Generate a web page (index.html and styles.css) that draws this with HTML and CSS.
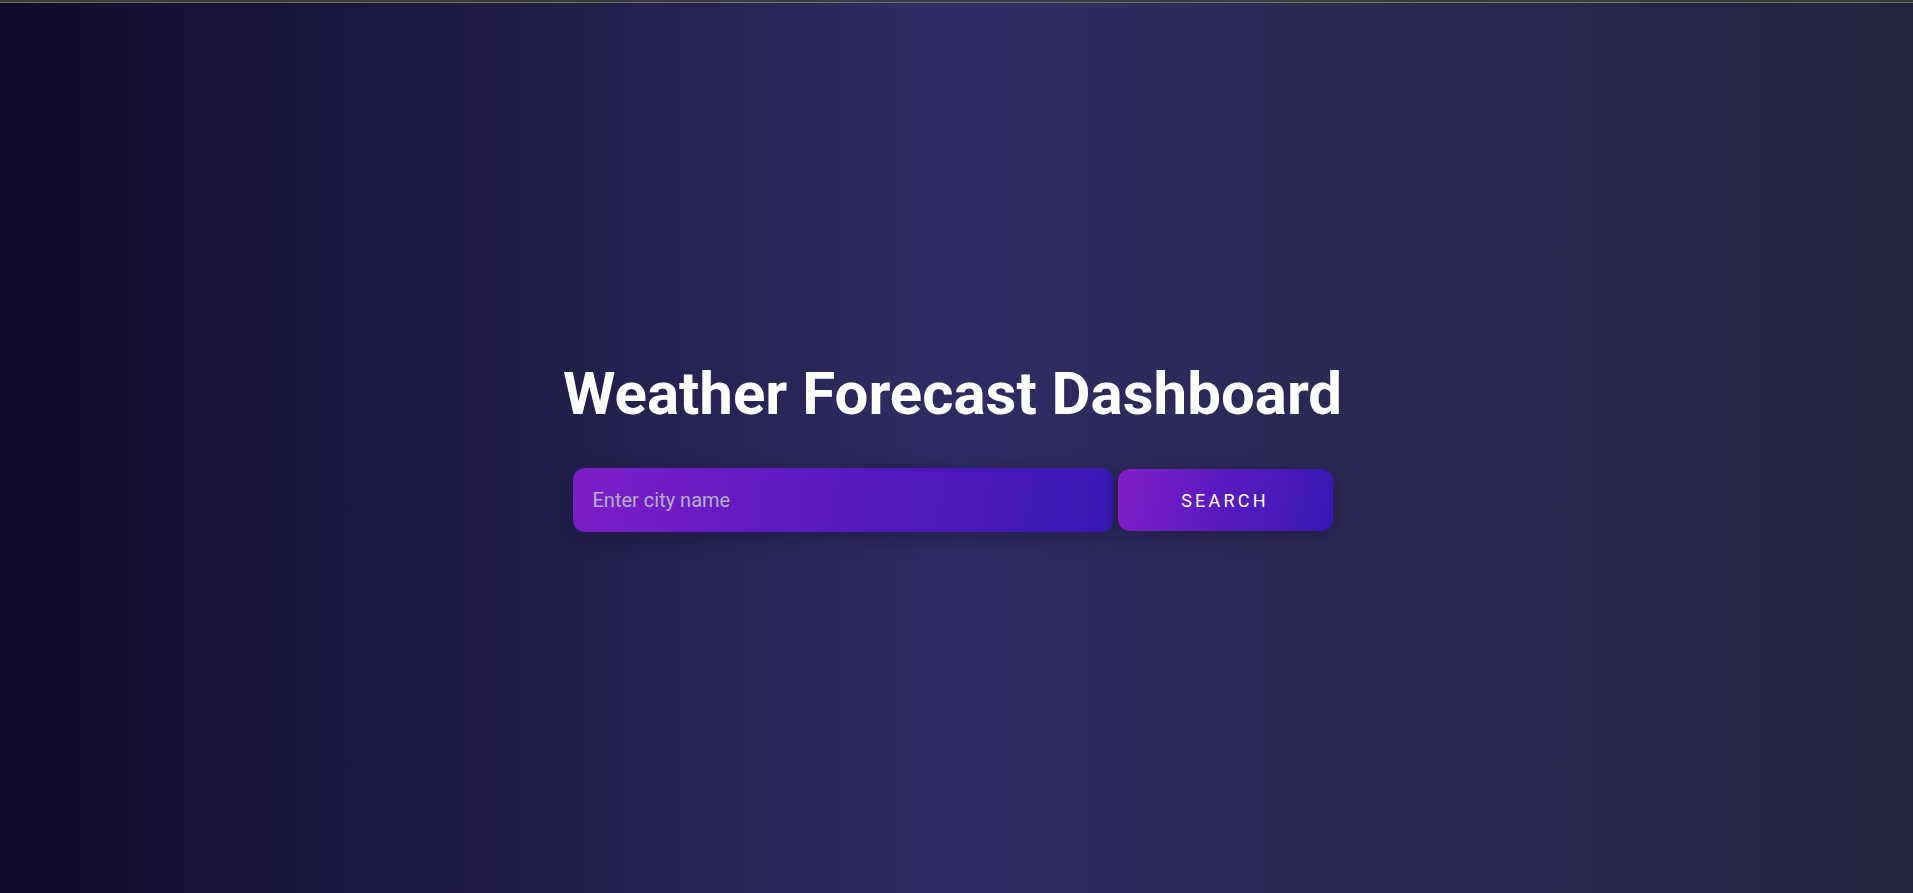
FILE: index.html
```html
<!DOCTYPE html>
<html lang="en">
<head>
<meta charset="utf-8">
<title>Weather Forecast Dashboard</title>
<link rel="stylesheet" href="styles.css">
</head>
<body>
<div class="topbar"></div>
<main class="page">
  <h1 class="title">Weather Forecast Dashboard</h1>
  <form class="search" onsubmit="return false;">
    <input class="search-input" type="text" placeholder="Enter city name">
    <button class="search-btn" type="submit">Search</button>
  </form>
</main>
</body>
</html>
```
FILE: styles.css
```css
* { box-sizing: border-box; }
html, body { margin: 0; padding: 0; height: 100%; }
body {
  font-family: Roboto, "Liberation Sans", sans-serif;
  background: linear-gradient(to right, #0f0c29, #302b63, #24243e);
  color: #fff;
  display: flex;
  flex-direction: column;
  overflow: hidden;
}
.topbar {
  height: 3px;
  background: #3b3b3b;
  border-bottom: 1px solid #6e6e6e;
  flex: none;
}
.page {
  flex: 1;
  display: flex;
  flex-direction: column;
  align-items: center;
  justify-content: center;
  padding: 0 8px 6px 0;
}
.title {
  margin: 0 0 38px;
  font-size: 60px;
  font-weight: 700;
  line-height: 1.2;
}
.search {
  display: flex;
  gap: 5px;
  align-items: center;
}
.search-input {
  width: 540px;
  height: 64px;
  border: none;
  border-radius: 12px;
  padding: 0 20px;
  font-family: inherit;
  font-size: 20px;
  color: #fff;
  background: linear-gradient(100deg, #7e1ec8, #5a1ac0 45%, #3818b6);
  box-shadow: 0 5px 20px rgba(10, 8, 30, 0.3);
  outline: none;
}
.search-input::placeholder { color: #b6b0c6; }
.search-btn {
  width: 215px;
  height: 62px;
  border: none;
  border-radius: 12px;
  font-family: inherit;
  font-size: 18px;
  font-weight: 400;
  letter-spacing: 3.2px;
  text-transform: uppercase;
  color: #fff;
  background: linear-gradient(100deg, #821fc8, #5a1ac0 45%, #3818b6);
  box-shadow: 0 5px 20px rgba(10, 8, 30, 0.3);
  cursor: pointer;
}
```
